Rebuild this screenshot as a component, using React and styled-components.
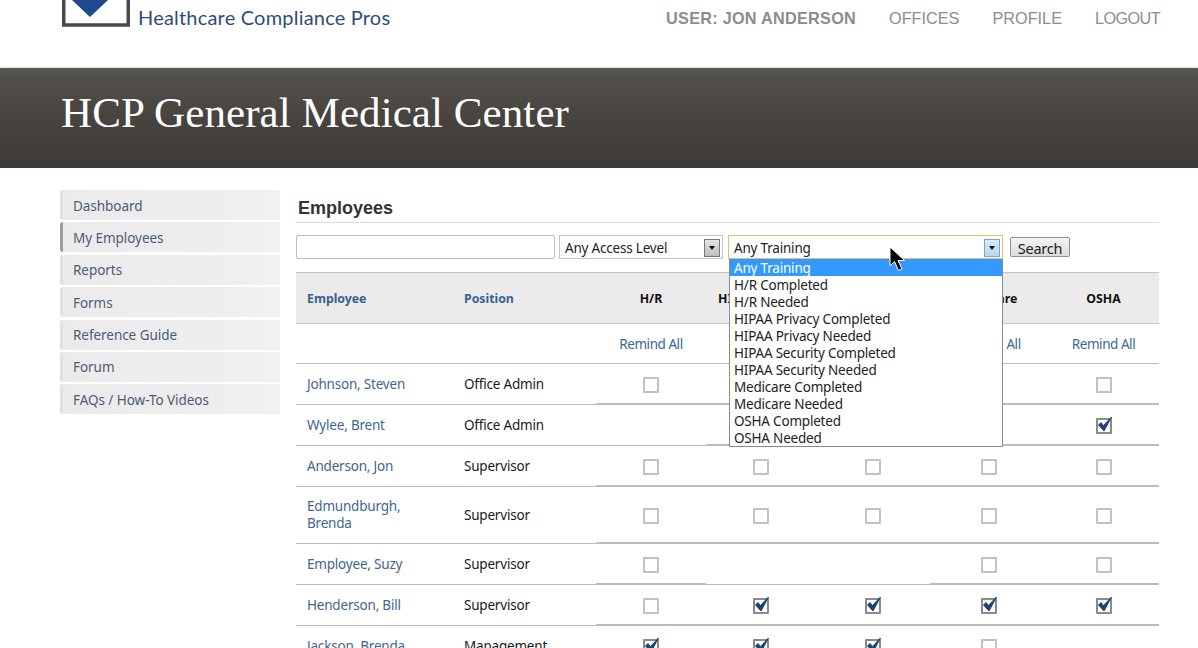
import React from 'react';
import styled, { createGlobalStyle } from 'styled-components';

const GlobalStyle = createGlobalStyle`
  html, body {
    margin: 0;
    padding: 0;
    height: 648px;
    overflow: hidden;
    background: #fff;
    font-family: "Noto Sans", "DejaVu Sans", sans-serif;
  }
`;

const Header = styled.header`
  height: 68px;
  padding: 0 38px 0 62px;
  display: flex;
  justify-content: space-between;
  align-items: flex-start;
`;

const Logo = styled.div`
  display: flex;
  align-items: flex-start;
  gap: 8px;
`;

const LogoName = styled.span`
  font-family: Lato, sans-serif;
  font-size: 20px;
  line-height: 24px;
  margin-top: 5px;
  letter-spacing: 0.2px;
  color: #2f4d78;
`;

const Nav = styled.nav`
  display: flex;
  gap: 33px;
  padding-top: 9px;
`;

const NavItem = styled.a`
  font-family: "Liberation Sans", Arial, sans-serif;
  font-size: 16.25px;
  line-height: 19px;
  color: #8c8c8c;
  font-weight: ${(p) => (p.$bold ? 700 : 400)};
  letter-spacing: ${(p) => p.$spacing || 0}px;
`;

const Banner = styled.div`
  height: 100px;
  box-sizing: border-box;
  padding: 0 0 12px 61px;
  display: flex;
  align-items: center;
  background: linear-gradient(#585858 0, #524e49 12%, #423f3c 70%, #3d3b39 100%);
  box-shadow: 0 -1px 2px #ddd;
`;

const Title = styled.h1`
  margin: 0;
  font-family: "Liberation Serif", "Times New Roman", serif;
  font-weight: 400;
  font-size: 43px;
  letter-spacing: 0.08px;
  color: #fff;
`;

const Main = styled.div`
  display: flex;
  align-items: flex-start;
  gap: 16px;
  padding: 22px 0 0 60px;
`;

const Sidebar = styled.ul`
  list-style: none;
  margin: 0;
  padding: 0;
  width: 220px;
  display: flex;
  flex-direction: column;
  gap: 2.4px;
`;

const SideItem = styled.li`
  height: 30px;
  box-sizing: border-box;
  padding: 1px 0 0 10px;
  display: flex;
  align-items: center;
  font-size: 13.5px;
  letter-spacing: -0.05px;
  color: #4b5d72;
  background: linear-gradient(90deg, #ebebeb, #eeeeee 70%, #f1f1f1);
  border-left: 3px solid ${(p) => (p.$active ? '#9c9c9c' : '#e0e0e0')};
  border-radius: 3px 0 0 3px;
`;

const Content = styled.div`
  width: 863px;
`;

const Heading = styled.h2`
  margin: 0 0 12px;
  padding: 8px 0 3px 2px;
  font-family: "Liberation Sans", Arial, sans-serif;
  font-size: 18px;
  line-height: 21px;
  color: #333;
  border-bottom: 1px solid #ddd;
`;

const SearchBar = styled.form`
  display: flex;
  align-items: center;
  height: 24px;
  margin-bottom: 13px;
`;

const TextInput = styled.input`
  width: 259px;
  height: 24px;
  box-sizing: border-box;
  border: 1px solid #bdbdbd;
  border-radius: 2px;
  margin-right: 4px;
  padding: 0;
`;

const Select = styled.div`
  position: relative;
  box-sizing: border-box;
  height: 24px;
  width: ${(p) => p.$width}px;
  margin-right: ${(p) => p.$gap}px;
  border: 1px solid ${(p) => (p.$open ? '#e0c070' : '#c4c4c4')};
  padding: 1px 0 0 5px;
  display: flex;
  align-items: center;
  justify-content: space-between;
  font-size: 13.5px;
  letter-spacing: -0.2px;
  color: #222;
  background: #fff;
`;

const Arrow = styled.span`
  width: 16px;
  height: 18px;
  margin-right: 2px;
  box-sizing: border-box;
  border: 1px solid ${(p) => (p.$open ? '#7da2c4' : '#777')};
  background: ${(p) => (p.$open ? 'linear-gradient(#d9ecfa, #b5d6ef)' : 'linear-gradient(#e6e6e6, #bcbcbc)')};
  display: flex;
  align-items: center;
  justify-content: center;

  &::after {
    content: '';
    border: 3.5px solid transparent;
    border-top: 4px solid #111;
    border-bottom: 0;
  }
`;

const Options = styled.ul`
  position: absolute;
  z-index: 5;
  top: 23px;
  left: 0;
  width: 274px;
  box-sizing: border-box;
  margin: 0;
  padding: 0;
  list-style: none;
  background: #fff;
  border: 1px solid #8b8b8b;
  border-top: 0;
`;

const Option = styled.li`
  height: 17px;
  line-height: 19px;
  padding-left: 4px;
  font-size: 13.5px;
  letter-spacing: -0.2px;
  color: ${(p) => (p.$selected ? '#fff' : '#222')};
  background: ${(p) => (p.$selected ? '#3399ff' : 'transparent')};
`;

const Cursor = styled.svg`
  position: absolute;
  z-index: 6;
  left: 160px;
  top: 10px;
`;

const SearchButton = styled.button`
  width: 60px;
  height: 20px;
  padding: 0;
  box-sizing: border-box;
  border: 1px solid #8e8e8e;
  border-radius: 2px;
  background: linear-gradient(#f5f5f5, #dcdcdc);
  font-family: inherit;
  font-size: 14.5px;
  letter-spacing: -0.2px;
  color: #222;
`;

const Table = styled.table`
  width: 863px;
  table-layout: fixed;
  border-collapse: separate;
  border-spacing: 0;
`;

const HeadCell = styled.th`
  height: 50px;
  padding: 0;
  padding-left: ${(p) => (p.$left ? '11px' : '0')};
  text-align: ${(p) => (p.$left ? 'left' : 'center')};
  font-family: "Noto Sans", sans-serif;
  font-size: 12.3px;
  font-weight: 700;
  color: ${(p) => (p.$left ? '#376290' : '#111')};
  background: #ebebeb;
  border-top: 1px solid #c4c4c4;
  border-bottom: 1px solid #c4c4c4;
`;

const Cell = styled.td`
  height: ${(p) => p.$height}px;
  padding: 0 ${(p) => (p.$left ? '20px' : '0')} 0 ${(p) => (p.$left ? '11px' : '0')};
  box-sizing: content-box;
  font-size: 13.5px;
  line-height: 17px;
  letter-spacing: -0.2px;
  text-align: ${(p) => (p.$left ? 'left' : 'center')};
  color: ${(p) => (p.$link ? '#3f6690' : '#1a1a1a')};
  border-bottom: 1px solid #bcbcbc;
`;

const RemindCell = styled(Cell)`
  height: 37px;
  padding-top: 2px;
  letter-spacing: -0.45px;
`;

const MarkCell = styled(Cell)`
  padding-top: 2px;
  border-bottom-width: ${(p) => (p.$thick ? '2px' : '1px')};
`;

const Box = styled.span`
  position: relative;
  display: inline-block;
  width: 16px;
  height: 16px;
  box-sizing: border-box;
  vertical-align: middle;
  border: 2px solid ${(p) => (p.$checked ? '#8a8a8a' : '#c2c2c2')};
  border-radius: 1px;
  background: #fff;
`;

const Tick = styled.svg`
  position: absolute;
  left: -1px;
  top: -4px;
`;

const menu = ['Dashboard', 'My Employees', 'Reports', 'Forms', 'Reference Guide', 'Forum', 'FAQs / How-To Videos'];

const training = [
  'Any Training',
  'H/R Completed',
  'H/R Needed',
  'HIPAA Privacy Completed',
  'HIPAA Privacy Needed',
  'HIPAA Security Completed',
  'HIPAA Security Needed',
  'Medicare Completed',
  'Medicare Needed',
  'OSHA Completed',
  'OSHA Needed',
];

// x = checked, o = empty box, - = no box for that course
const employees = [
  { name: 'Johnson, Steven', position: 'Office Admin', marks: 'oooxo', height: 40 },
  { name: 'Wylee, Brent', position: 'Office Admin', marks: '-ooox', height: 40 },
  { name: 'Anderson, Jon', position: 'Supervisor', marks: 'ooooo', height: 40 },
  { name: 'Edmundburgh, Brenda', position: 'Supervisor', marks: 'ooooo', height: 56 },
  { name: 'Employee, Suzy', position: 'Supervisor', marks: 'o--oo', height: 40 },
  { name: 'Henderson, Bill', position: 'Supervisor', marks: 'oxxxx', height: 40 },
  { name: 'Jackson, Brenda', position: 'Management', marks: 'xxxo-', height: 40 },
];

const courses = ['H/R', 'HIPAA Privacy', 'HIPAA Security', 'Medicare', 'OSHA'];
const widths = [157, 143, 110, 110, 114, 118, 111];

const Mark = ({ checked }) => (
  <Box $checked={checked}>
    {checked && (
      <Tick width="17" height="17" viewBox="0 0 17 17">
        <path d="M1.5 9 L4 6.5 L6.5 9.5 L14.5 1 L7 15 Z" fill="#1d4477" stroke="#1d4477" strokeWidth="1" />
      </Tick>
    )}
  </Box>
);

const App = () => {
  return (
    <>
      <GlobalStyle />
      <Header>
        <Logo>
          <svg width="68" height="27" viewBox="0 0 68 27">
            <path d="M1.7 0 V25 H66.3 V0" fill="none" stroke="#4a4a4a" strokeWidth="3.6" />
            <path d="M10 0 H46 L28 17 Z" fill="#1c4a8c" />
          </svg>
          <LogoName>Healthcare Compliance Pros</LogoName>
        </Logo>
        <Nav>
          <NavItem $bold $spacing={0.25}>USER: JON ANDERSON</NavItem>
          <NavItem>OFFICES</NavItem>
          <NavItem>PROFILE</NavItem>
          <NavItem $spacing={-0.6}>LOGOUT</NavItem>
        </Nav>
      </Header>
      <Banner>
        <Title>HCP General Medical Center</Title>
      </Banner>
      <Main>
        <Sidebar>
          {menu.map((item) => (
            <SideItem key={item} $active={item === 'My Employees'}>
              {item}
            </SideItem>
          ))}
        </Sidebar>
        <Content>
          <Heading>Employees</Heading>
          <SearchBar>
            <TextInput type="text" />
            <Select $width={164} $gap={5}>
              Any Access Level
              <Arrow />
            </Select>
            <Select $width={275} $gap={7} $open>
              Any Training
              <Arrow $open />
              <Options>
                {training.map((t, i) => (
                  <Option key={t} $selected={i === 0}>
                    {t}
                  </Option>
                ))}
              </Options>
              <Cursor width="17" height="26" viewBox="0 0 17 26">
                <path d="M1 1 V20 L5.5 15.5 L9.5 24.5 L13 23 L9 14.5 H15.5 Z" fill="#000" stroke="#fff" strokeWidth="1" />
              </Cursor>
            </Select>
            <SearchButton type="button">Search</SearchButton>
          </SearchBar>
          <Table>
            <colgroup>
              {widths.map((w, i) => (
                <col key={i} width={w} />
              ))}
            </colgroup>
            <thead>
              <tr>
                <HeadCell $left>Employee</HeadCell>
                <HeadCell $left>Position</HeadCell>
                {courses.map((c) => (
                  <HeadCell key={c}>{c}</HeadCell>
                ))}
              </tr>
            </thead>
            <tbody>
              <tr>
                <Cell $height={39} />
                <Cell $height={39} />
                {courses.map((c) => (
                  <RemindCell key={c} $link>
                    Remind All
                  </RemindCell>
                ))}
              </tr>
              {employees.map((e) => (
                <tr key={e.name}>
                  <Cell $left $link $height={e.height}>
                    {e.name}
                  </Cell>
                  <Cell $left $height={e.height}>
                    {e.position}
                  </Cell>
                  {e.marks.split('').map((m, i) => (
                    <MarkCell key={i} $height={e.height - 3} $thick={m !== '-'}>
                      {m !== '-' && <Mark checked={m === 'x'} />}
                    </MarkCell>
                  ))}
                </tr>
              ))}
            </tbody>
          </Table>
        </Content>
      </Main>
    </>
  );
};

export default App;
